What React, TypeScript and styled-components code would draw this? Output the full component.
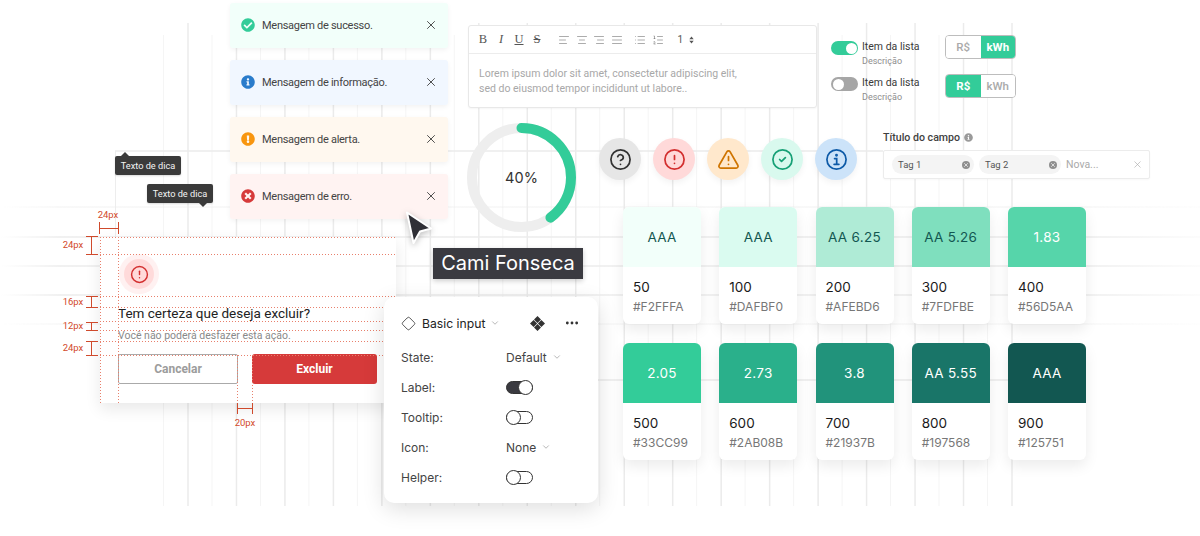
import styled, { createGlobalStyle } from "styled-components";
import {
	AlignCenter,
	AlignJustify,
	AlignLeft,
	AlignRight,
	ChevronDown,
	CircleAlert,
	CircleCheck,
	CircleHelp,
	Diamond,
	Ellipsis,
	List,
	ListOrdered,
	TriangleAlert,
	X,
} from "lucide-react";
import { FaCheckCircle, FaExclamationCircle, FaInfoCircle, FaTimesCircle } from "react-icons/fa";

const GlobalStyle = createGlobalStyle`
	html, body { margin: 0; padding: 0; background: #fff; }
	body { font-family: Roboto, "Liberation Sans", sans-serif; overflow: hidden; }
	* { box-sizing: border-box; }
`;

const Canvas = styled.div`
	position: relative;
	width: 1200px;
	height: 536px;
	overflow: hidden;
	background: #fff;
`;

const Backdrop = styled.svg`
	position: absolute;
	inset: 0;
`;

/* ---- toasts ---- */
const ToastStack = styled.div`
	position: absolute;
	left: 230px;
	top: 3px;
	width: 218px;
	display: flex;
	flex-direction: column;
	gap: 12px;
`;

const Toast = styled.div<{ $bg: string; $color: string }>`
	height: 45px;
	display: flex;
	align-items: center;
	gap: 7px;
	padding: 0 10px 1px 11px;
	background: ${(p) => p.$bg};
	border-radius: 3px;
	box-shadow: 0 2px 5px rgba(0, 0, 0, 0.05);
	font-size: 11px;
	letter-spacing: -0.28px;
	white-space: nowrap;
	color: #444;

	& > svg:first-child {
		color: ${(p) => p.$color};
		flex: none;
	}
	& > span {
		flex: 1;
	}
	& > svg:last-child {
		flex: none;
		color: #444;
	}
`;

/* ---- tooltips ---- */
const Tip = styled.div`
	position: absolute;
	height: 19px;
	width: 66px;
	background: #3a3a3a;
	border-radius: 2px;
	color: #f4f4f4;
	font-size: 9.2px;
	line-height: 19px;
	text-align: center;
	box-shadow: 0 1px 2px rgba(0, 0, 0, 0.15);

	&::after {
		content: "";
		position: absolute;
		width: 0;
		height: 0;
		border-left: 4px solid transparent;
		border-right: 4px solid transparent;
	}
`;

const TipUp = styled(Tip)`
	left: 115px;
	top: 156px;
	&::after {
		left: 6px;
		top: -4px;
		border-bottom: 4px solid #3a3a3a;
	}
`;

const TipDown = styled(Tip)`
	left: 147px;
	top: 184px;
	&::after {
		right: 6px;
		bottom: -4px;
		border-top: 4px solid #3a3a3a;
	}
`;

/* ---- dialog ---- */
const Dialog = styled.div`
	position: absolute;
	left: 100px;
	top: 237px;
	width: 296px;
	height: 166px;
	padding: 17px 18px 0;
	background: #fff;
	border-radius: 3px;
	box-shadow: 0 6px 16px rgba(0, 0, 0, 0.09);
`;

const HaloOuter = styled.div`
	width: 40px;
	height: 40px;
	margin-left: 1px;
	border-radius: 50%;
	background: #fff1f1;
	display: flex;
	align-items: center;
	justify-content: center;
`;

const HaloInner = styled.div`
	width: 30px;
	height: 30px;
	border-radius: 50%;
	background: #ffdada;
	color: #d32f2f;
	display: flex;
	align-items: center;
	justify-content: center;
`;

const DialogTitle = styled.div`
	margin-top: 10px;
	font-size: 13.5px;
	font-weight: 400;
	line-height: 18px;
	color: #222;
`;

const DialogText = styled.div`
	margin-top: 7px;
	font-size: 10.5px;
	line-height: 14px;
	color: #8a8a8a;
`;

const DialogActions = styled.div`
	margin-top: 11px;
	width: 259px;
	display: flex;
	justify-content: space-between;
`;

const CancelButton = styled.button`
	width: 120px;
	height: 30px;
	padding: 0;
	background: #fff;
	border: 1px solid #aaa;
	border-radius: 2px;
	font: 700 12px Roboto, sans-serif;
	color: #9c9c9c;
`;

const DangerButton = styled.button`
	width: 125px;
	height: 30px;
	padding: 0;
	background: #d63a3a;
	border: 0;
	border-radius: 3px;
	font: 700 12px Roboto, sans-serif;
	color: #fff;
`;

/* ---- red measures over the dialog ---- */
const Overlay = styled.svg`
	position: absolute;
	inset: 0;
	pointer-events: none;
`;

const MeasureLabel = styled.span<{ $x: number; $y: number }>`
	position: absolute;
	left: ${(p) => p.$x}px;
	top: ${(p) => p.$y}px;
	width: 28px;
	text-align: center;
	font-size: 9.5px;
	line-height: 12px;
	color: #d2492a;
`;

/* ---- editor ---- */
const Editor = styled.div`
	position: absolute;
	left: 468px;
	top: 25px;
	width: 349px;
	height: 83px;
	background: #fff;
	border: 1px solid #e8e8e8;
	border-radius: 3px;
	box-shadow: 0 1px 2px rgba(0, 0, 0, 0.04);
`;

const Toolbar = styled.div`
	height: 28px;
	display: flex;
	align-items: center;
	padding-left: 8px;
	border-bottom: 1px solid #ececec;
	color: #666;
`;

const ToolGroup = styled.div<{ $gap: number; $mr: number }>`
	display: flex;
	align-items: center;
	gap: ${(p) => p.$gap}px;
	margin-right: ${(p) => p.$mr}px;
`;

const Glyph = styled.span<{ $italic?: boolean; $line?: string }>`
	width: 12px;
	text-align: center;
	font-family: "Liberation Serif", serif;
	font-size: 12.5px;
	font-style: ${(p) => (p.$italic ? "italic" : "normal")};
	text-decoration: ${(p) => p.$line ?? "none"};
	color: #555;
`;

const SizeValue = styled.span`
	font-size: 10px;
	color: #555;
`;

const EditorBody = styled.div`
	padding: 12px 10px;
	font-size: 10.5px;
	line-height: 15px;
	color: #a8a8a8;
`;

/* ---- donut ---- */
const Donut = styled.div`
	position: absolute;
	left: 467px;
	top: 123px;
	width: 109px;
	height: 109px;
	display: flex;
	align-items: center;
	justify-content: center;
	font-family: Inter, sans-serif;
	font-size: 14.5px;
	color: #333;

	& > svg {
		position: absolute;
		inset: 0;
	}
`;

/* ---- list items + segmented ---- */
const OptionGrid = styled.div`
	position: absolute;
	left: 831px;
	top: 35px;
	display: grid;
	grid-template-columns: 114px 71px;
	grid-auto-rows: 24px;
	row-gap: 15px;
`;

const ListItem = styled.div<{ $top: number }>`
	display: flex;
	gap: 4px;
	padding-top: ${(p) => p.$top}px;
`;

const Switch = styled.div<{ $on: boolean }>`
	width: 27px;
	height: 14px;
	padding: 1.5px;
	border-radius: 7px;
	background: ${(p) => (p.$on ? "#33cc99" : "#a6a6a6")};
	display: flex;
	justify-content: ${(p) => (p.$on ? "flex-end" : "flex-start")};

	&::after {
		content: "";
		width: 11px;
		height: 11px;
		border-radius: 50%;
		background: #fff;
	}
`;

const ItemTitle = styled.div`
	margin-top: -1px;
	font-size: 10.5px;
	line-height: 13px;
	color: #3a3a3a;
`;

const ItemHint = styled.div`
	margin-top: 2px;
	font-size: 9px;
	line-height: 12px;
	color: #8d8d8d;
`;

const Segmented = styled.div`
	display: flex;
	height: 24px;
	border: 1px solid #bdbdbd;
	border-radius: 4px;
	overflow: hidden;
`;

const Segment = styled.div<{ $on: boolean }>`
	flex: 1;
	display: flex;
	align-items: center;
	justify-content: center;
	background: ${(p) => (p.$on ? "#33cc99" : "#fff")};
	color: ${(p) => (p.$on ? "#fff" : "#aaa")};
	font-size: 11.5px;
	font-weight: ${(p) => (p.$on ? 700 : 500)};
`;

/* ---- tag field ---- */
const TagBlock = styled.div`
	position: absolute;
	left: 883px;
	top: 130px;
	width: 267px;
`;

const FieldLabel = styled.div`
	display: flex;
	align-items: center;
	gap: 4px;
	height: 15px;
	font-size: 10.6px;
	font-weight: 500;
	color: #3f3f3f;
	& > svg {
		color: #9a9a9a;
	}
`;

const TagField = styled.div`
	margin-top: 5px;
	height: 29px;
	display: flex;
	align-items: center;
	gap: 5px;
	padding: 0 6px 0 8px;
	background: #fff;
	border: 1px solid #ececec;
	border-radius: 2px;
	box-shadow: 0 1px 2px rgba(0, 0, 0, 0.03);
`;

const Tag = styled.div`
	width: 82px;
	height: 19px;
	display: flex;
	align-items: center;
	justify-content: space-between;
	padding: 0 4px 0 6px;
	background: #f4f4f4;
	border-radius: 10px;
	font-size: 9.5px;
	color: #555;
`;

const TagClose = styled.span`
	width: 8px;
	height: 8px;
	border-radius: 50%;
	background: #8f8f8f;
	display: flex;
	align-items: center;
	justify-content: center;
	color: #f4f4f4;
`;

const TagPlaceholder = styled.span`
	flex: 1;
	font-size: 10.5px;
	color: #aaa;
`;

const FieldClear = styled.span`
	color: #aaa;
	display: flex;
`;

/* ---- status circles ---- */
const StatusRow = styled.div`
	position: absolute;
	left: 599px;
	top: 138px;
	display: flex;
	gap: 12px;
`;

const StatusCircle = styled.div<{ $bg: string; $color: string }>`
	width: 42px;
	height: 42px;
	border-radius: 50%;
	background: ${(p) => p.$bg};
	color: ${(p) => p.$color};
	display: flex;
	align-items: center;
	justify-content: center;
	box-shadow: 0 3px 6px rgba(0, 0, 0, 0.05);
`;

/* ---- palette ---- */
const Palette = styled.div`
	position: absolute;
	left: 623px;
	top: 207px;
	display: grid;
	grid-template-columns: repeat(5, 78px);
	column-gap: 18.25px;
	row-gap: 19px;
	font-family: Inter, sans-serif;
`;

const Swatch = styled.div`
	height: 117px;
	background: #fff;
	border-radius: 6px;
	overflow: hidden;
	box-shadow: 0 6px 14px rgba(0, 0, 0, 0.08);
`;

const SwatchColor = styled.div<{ $bg: string; $light: boolean }>`
	height: 60px;
	display: flex;
	align-items: center;
	justify-content: center;
	background: ${(p) => p.$bg};
	color: ${(p) => (p.$light ? "#125751" : "#fff")};
	font-size: 13.5px;
	letter-spacing: 0.3px;
`;

const SwatchMeta = styled.div`
	padding: 12px 10px 0;
`;

const SwatchName = styled.div`
	font-size: 13.5px;
	line-height: 16px;
	color: #1a1a1a;
`;

const SwatchHex = styled.div`
	margin-top: 4px;
	font-size: 12px;
	line-height: 15px;
	color: #777;
`;

/* ---- cursor ---- */
const Cursor = styled.svg`
	position: absolute;
	left: 402px;
	top: 208px;
	filter: drop-shadow(0 2px 3px rgba(0, 0, 0, 0.25));
`;

const CursorName = styled.div`
	position: absolute;
	left: 433px;
	top: 248px;
	width: 150px;
	height: 31px;
	background: #3a3a40;
	color: #fff;
	font-family: Inter, sans-serif;
	font-size: 20px;
	line-height: 31px;
	text-align: center;
	box-shadow: 0 2px 5px rgba(0, 0, 0, 0.2);
`;

/* ---- properties panel ---- */
const Panel = styled.div`
	position: absolute;
	left: 384px;
	top: 297px;
	width: 214px;
	height: 206px;
	padding: 10px 17px 0;
	background: #fff;
	border-radius: 10px;
	box-shadow: 0 6px 22px rgba(0, 0, 0, 0.13);
	font-family: Inter, sans-serif;
	font-size: 12px;
	color: #444;
`;

const PanelHead = styled.div`
	height: 32px;
	margin-bottom: 3px;
	display: flex;
	align-items: center;
	color: #222;
`;

const PanelTitle = styled.span`
	margin-left: 6px;
	margin-right: 5px;
	font-size: 12.2px;
`;

const PanelHeadSpacer = styled.span`
	flex: 1;
`;

const PanelDots = styled.span`
	margin-left: 19px;
	margin-right: 1px;
	display: flex;
`;

const PropRow = styled.div`
	height: 30px;
	display: grid;
	grid-template-columns: 105px 1fr;
	align-items: center;
`;

const PropValue = styled.span`
	display: flex;
	align-items: center;
	gap: 5px;
	& > svg {
		color: #aaa;
	}
`;

const PanelToggle = styled.div<{ $on: boolean }>`
	position: relative;
	width: 27px;
	height: 13px;
	border: 1.2px solid #333;
	border-bottom-width: 1.6px;
	border-radius: 7px;
	background: ${(p) => (p.$on ? "#3a3a40" : "#fff")};

	&::after {
		content: "";
		position: absolute;
		top: -1.2px;
		${(p) => (p.$on ? "right: -1.2px;" : "left: -1.2px;")}
		width: 13px;
		height: 13px;
		border-radius: 50%;
		background: #fff;
		border: 1.2px solid #333;
	}
`;

const majorX = Array.from({ length: 18 }, (_, i) => 188 + i * 48.47);
const minorX = Array.from({ length: 18 }, (_, i) => 163.5 + i * 48.47);

// lucide's Info has a plain stem, the reference has a serifed "i"
function SerifInfo({ size, strokeWidth }: { size: number; strokeWidth: number }) {
	return (
		<svg width={size} height={size} viewBox="0 0 24 24" fill="none" stroke="currentColor" strokeWidth={strokeWidth} strokeLinecap="round">
			<circle cx={12} cy={12} r={10} />
			<path d="M10 11h2.2v6M9.5 17h5" />
			<circle cx={12} cy={7.5} r={0.6} fill="currentColor" />
		</svg>
	);
}

const toasts = [
	{ bg: "#f2fffa", color: "#33cc99", Icon: FaCheckCircle, text: "Mensagem de sucesso." },
	{ bg: "#f1f7ff", color: "#2a7ccb", Icon: FaInfoCircle, text: "Mensagem de informação." },
	{ bg: "#fff8ef", color: "#f8960f", Icon: FaExclamationCircle, text: "Mensagem de alerta." },
	{ bg: "#fff3f2", color: "#d63a3a", Icon: FaTimesCircle, text: "Mensagem de erro." },
];

const swatches = [
	{ name: "50", hex: "#F2FFFA", score: "AAA", light: true },
	{ name: "100", hex: "#DAFBF0", score: "AAA", light: true },
	{ name: "200", hex: "#AFEBD6", score: "AA 6.25", light: true },
	{ name: "300", hex: "#7FDFBE", score: "AA 5.26", light: true },
	{ name: "400", hex: "#56D5AA", score: "1.83", light: false },
	{ name: "500", hex: "#33CC99", score: "2.05", light: false },
	{ name: "600", hex: "#2AB08B", score: "2.73", light: false },
	{ name: "700", hex: "#21937B", score: "3.8", light: false },
	{ name: "800", hex: "#197568", score: "AA 5.55", light: false },
	{ name: "900", hex: "#125751", score: "AAA", light: false },
];

const statuses = [
	{ bg: "#e6e6e6", color: "#333", Icon: CircleHelp },
	{ bg: "#ffd9d9", color: "#d32f2f", Icon: CircleAlert },
	{ bg: "#ffe8cc", color: "#cf7400", Icon: TriangleAlert },
	{ bg: "#d9f9ee", color: "#17a076", Icon: CircleCheck },
	{ bg: "#cce3f9", color: "#0d5aa7", Icon: SerifInfo },
];

const dottedH = [
	[100, 396, 237],
	[100, 396, 254],
	[100, 396, 296],
	[100, 384, 307],
	[100, 384, 321],
	[100, 384, 330],
	[100, 384, 341],
	[100, 384, 355],
];

const leftBrackets = [
	[236, 254],
	[296, 307],
	[322, 330],
	[341, 355],
];

function Grid() {
	return (
		<Backdrop width={1200} height={536} aria-hidden>
			<defs>
				<linearGradient id="fade" gradientUnits="userSpaceOnUse" x1="0" y1="0" x2="1200" y2="0">
					<stop offset="0" stopColor="#ececec" stopOpacity="0" />
					<stop offset="0.05" stopColor="#ececec" />
					<stop offset="0.9" stopColor="#ececec" />
					<stop offset="1" stopColor="#ececec" stopOpacity="0.2" />
				</linearGradient>
			</defs>
			{minorX.map((x) => (
				<line key={x} x1={x} x2={x} y1={35} y2={506} stroke="#f5f5f5" strokeWidth={1} />
			))}
			{majorX.map((x) => (
				<line key={x} x1={x} x2={x} y1={23} y2={506} stroke="#ebebeb" strokeWidth={1.5} />
			))}
			<line x1={115.5} x2={115.5} y1={151} y2={237} stroke="#ededed" strokeWidth={1} />
			<line x1={115} x2={883} y1={151} y2={151} stroke="#ebebeb" strokeWidth={1.5} />
			<line x1={0} x2={1200} y1={207} y2={207} stroke="url(#fade)" strokeWidth={1} opacity={0.7} />
			<line x1={0} x2={1200} y1={237} y2={237} stroke="url(#fade)" strokeWidth={1.5} />
			<line x1={0} x2={1200} y1={266} y2={266} stroke="url(#fade)" strokeWidth={1.5} />
			<line x1={0} x2={1200} y1={295} y2={295} stroke="url(#fade)" strokeWidth={1.5} />
			<line x1={0} x2={1200} y1={324} y2={324} stroke="url(#fade)" strokeWidth={1} opacity={0.6} />
			<line x1={384} x2={1008} y1={380} y2={380} stroke="#ebebeb" strokeWidth={1.5} />
		</Backdrop>
	);
}

function Measures() {
	return (
		<>
			<Overlay width={1200} height={536} aria-hidden>
				<g stroke="#e8806c" strokeWidth={1} strokeDasharray="1 2" fill="none">
					{dottedH.map(([x1, x2, y]) => (
						<line key={y} x1={x1} x2={x2} y1={y + 0.5} y2={y + 0.5} />
					))}
					<line x1={100.5} x2={100.5} y1={237} y2={403} />
					<line x1={118.5} x2={118.5} y1={237} y2={403} />
					<line x1={237.5} x2={237.5} y1={355} y2={403} />
					<line x1={252.5} x2={252.5} y1={355} y2={403} />
				</g>
				<g stroke="#cf4a2c" strokeWidth={1} fill="none">
					<path d="M99.5 222v12M118.5 222v12M100 228.5h18" />
					<path d="M237.5 403v11M252.5 403v11M238 408.5h14" />
					{leftBrackets.map(([a, b]) => (
						<path key={a} d={`M86 ${a + 0.5}h12M86 ${b + 0.5}h12M91.5 ${a}V${b}`} />
					))}
				</g>
			</Overlay>
			<MeasureLabel $x={94} $y={209}>24px</MeasureLabel>
			<MeasureLabel $x={59} $y={239}>24px</MeasureLabel>
			<MeasureLabel $x={59} $y={296}>16px</MeasureLabel>
			<MeasureLabel $x={59} $y={320}>12px</MeasureLabel>
			<MeasureLabel $x={59} $y={342}>24px</MeasureLabel>
			<MeasureLabel $x={231} $y={417}>20px</MeasureLabel>
		</>
	);
}

function RichEditor() {
	return (
		<Editor>
			<Toolbar>
				<ToolGroup $gap={6} $mr={15}>
					<Glyph>B</Glyph>
					<Glyph $italic>I</Glyph>
					<Glyph $line="underline">U</Glyph>
					<Glyph $line="line-through">S</Glyph>
				</ToolGroup>
				<ToolGroup $gap={5.5} $mr={11}>
					<AlignLeft size={12} strokeWidth={1.1} />
					<AlignCenter size={12} strokeWidth={1.1} />
					<AlignRight size={12} strokeWidth={1.1} />
					<AlignJustify size={12} strokeWidth={1.1} />
				</ToolGroup>
				<ToolGroup $gap={6} $mr={14}>
					<List size={12} strokeWidth={1.1} />
					<ListOrdered size={12} strokeWidth={1.1} />
				</ToolGroup>
				<ToolGroup $gap={6} $mr={0}>
					<SizeValue>1</SizeValue>
					<svg width={5} height={8} viewBox="0 0 5 8" fill="#555">
						<path d="M2.5 0.5L4.7 3.3H0.3zM2.5 7.5L0.3 4.7h4.4z" />
					</svg>
				</ToolGroup>
			</Toolbar>
			<EditorBody>
				Lorem ipsum dolor sit amet, consectetur adipiscing elit,
				<br />
				sed do eiusmod tempor incididunt ut labore..
			</EditorBody>
		</Editor>
	);
}

function ProgressDonut({ value }: { value: number }) {
	const r = 49.5;
	const length = 2 * Math.PI * r;
	return (
		<Donut>
			<svg width={109} height={109} viewBox="0 0 109 109" fill="none">
				<circle cx={54.5} cy={54.5} r={r} stroke="#eeeeee" strokeWidth={10} />
				<circle
					cx={54.5}
					cy={54.5}
					r={r}
					stroke="#33cc99"
					strokeWidth={10}
					strokeLinecap="round"
					strokeDasharray={`${(length * value) / 100} ${length}`}
					transform="rotate(-90 54.5 54.5)"
				/>
			</svg>
			{value}%
		</Donut>
	);
}

function PropertiesPanel() {
	return (
		<Panel>
			<PanelHead>
				<Diamond size={15} strokeWidth={1.2} />
				<PanelTitle>Basic input</PanelTitle>
				<ChevronDown size={10} color="#aaa" />
				<PanelHeadSpacer />
				<svg width={15} height={15} viewBox="0 0 15 15" fill="#333">
					<path d="M7.5 0L11 3.6 7.5 7.1 4 3.6zM7.5 7.9L11 11.4 7.5 15 4 11.4zM3.6 4L7.1 7.5 3.6 11 0 7.5zM11.4 4L15 7.5 11.4 11 7.9 7.5z" />
				</svg>
				<PanelDots>
					<Ellipsis size={16} strokeWidth={2.2} color="#333" />
				</PanelDots>
			</PanelHead>
			<PropRow>
				State:
				<PropValue>
					Default <ChevronDown size={10} />
				</PropValue>
			</PropRow>
			<PropRow>
				Label:
				<PanelToggle $on />
			</PropRow>
			<PropRow>
				Tooltip:
				<PanelToggle $on={false} />
			</PropRow>
			<PropRow>
				Icon:
				<PropValue>
					None <ChevronDown size={10} />
				</PropValue>
			</PropRow>
			<PropRow>
				Helper:
				<PanelToggle $on={false} />
			</PropRow>
		</Panel>
	);
}

export default function App() {
	return (
		<Canvas>
			<GlobalStyle />
			<Grid />

			<ToastStack>
				{toasts.map(({ bg, color, Icon, text }) => (
					<Toast key={text} $bg={bg} $color={color}>
						<Icon size={14} />
						<span>{text}</span>
						<X size={14} strokeWidth={1.6} />
					</Toast>
				))}
			</ToastStack>

			<TipUp>Texto de dica</TipUp>
			<TipDown>Texto de dica</TipDown>

			<Dialog>
				<HaloOuter>
					<HaloInner>
						<CircleAlert size={19} strokeWidth={1.8} />
					</HaloInner>
				</HaloOuter>
				<DialogTitle>Tem certeza que deseja excluir?</DialogTitle>
				<DialogText>Você não poderá desfazer esta ação.</DialogText>
				<DialogActions>
					<CancelButton>Cancelar</CancelButton>
					<DangerButton>Excluir</DangerButton>
				</DialogActions>
			</Dialog>
			<Measures />

			<RichEditor />
			<ProgressDonut value={40} />

			<OptionGrid>
				<ListItem $top={6}>
					<Switch $on />
					<div>
						<ItemTitle>Item da lista</ItemTitle>
						<ItemHint>Descrição</ItemHint>
					</div>
				</ListItem>
				<Segmented>
					<Segment $on={false}>R$</Segment>
					<Segment $on>kWh</Segment>
				</Segmented>
				<ListItem $top={3}>
					<Switch $on={false} />
					<div>
						<ItemTitle>Item da lista</ItemTitle>
						<ItemHint>Descrição</ItemHint>
					</div>
				</ListItem>
				<Segmented>
					<Segment $on>R$</Segment>
					<Segment $on={false}>kWh</Segment>
				</Segmented>
			</OptionGrid>

			<TagBlock>
				<FieldLabel>
					Título do campo <FaInfoCircle size={9} />
				</FieldLabel>
				<TagField>
					<Tag>
						Tag 1
						<TagClose>
							<X size={6} strokeWidth={3} />
						</TagClose>
					</Tag>
					<Tag>
						Tag 2
						<TagClose>
							<X size={6} strokeWidth={3} />
						</TagClose>
					</Tag>
					<TagPlaceholder>Nova...</TagPlaceholder>
					<FieldClear>
						<X size={11} strokeWidth={1.4} />
					</FieldClear>
				</TagField>
			</TagBlock>

			<StatusRow>
				{statuses.map(({ bg, color, Icon }) => (
					<StatusCircle key={bg} $bg={bg} $color={color}>
						<Icon size={23} strokeWidth={1.8} />
					</StatusCircle>
				))}
			</StatusRow>

			<Palette>
				{swatches.map((s) => (
					<Swatch key={s.name}>
						<SwatchColor $bg={s.hex} $light={s.light}>
							{s.score}
						</SwatchColor>
						<SwatchMeta>
							<SwatchName>{s.name}</SwatchName>
							<SwatchHex>{s.hex}</SwatchHex>
						</SwatchMeta>
					</Swatch>
				))}
			</Palette>

			<PropertiesPanel />

			<Cursor width={34} height={40} viewBox="0 0 34 40" aria-hidden>
				<path d="M5 4.5L29 20.5 18 23.5 11.5 35z" fill="#2f2f36" stroke="#fff" strokeWidth={2} strokeLinejoin="round" />
			</Cursor>
			<CursorName>Cami Fonseca</CursorName>
		</Canvas>
	);
}
